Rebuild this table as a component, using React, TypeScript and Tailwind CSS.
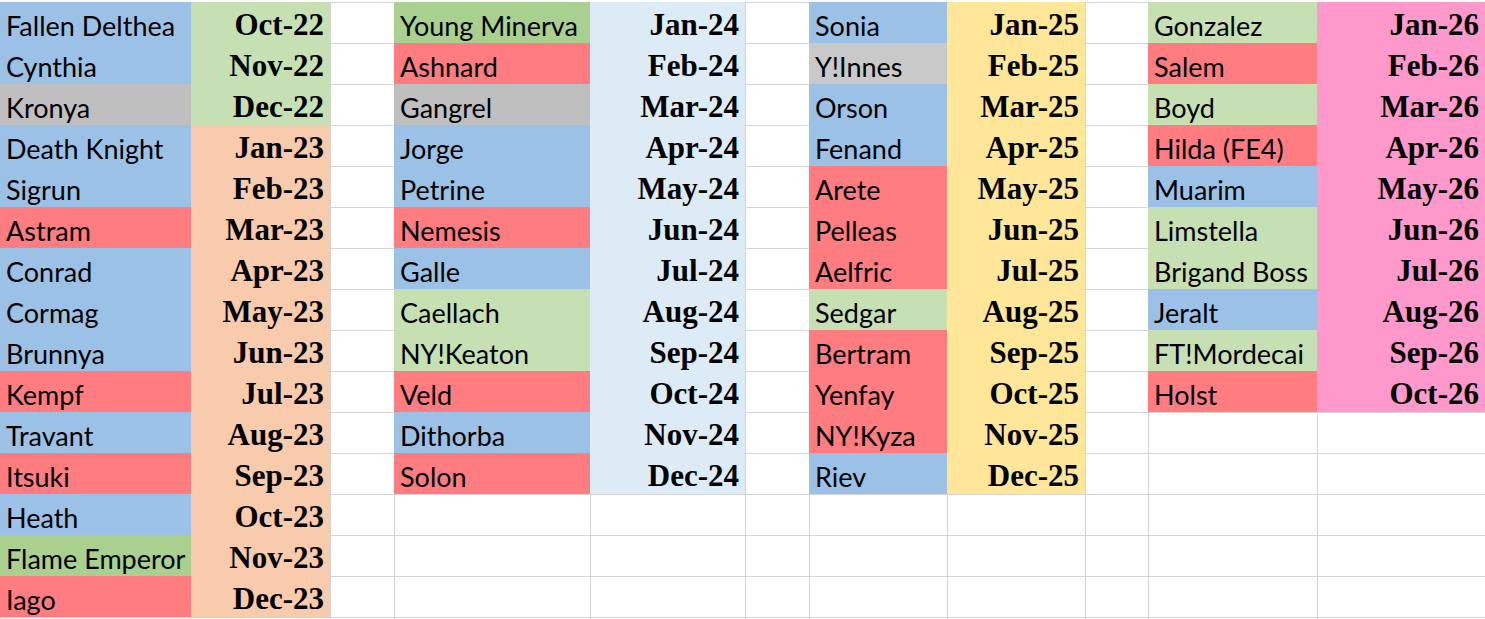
import React from "react";

type Cell =
  | { kind: "name"; text: string; bg: string }
  | { kind: "date"; text: string; bg: string }
  | { kind: "blank" };

const BLUE = "bg-[#9bc2e6]";
const RED = "bg-[#ff7c80]";
const GRAY = "bg-[#bfbfbf]";
const LGRAY = "bg-[#c9c9c9]";
const LGREEN = "bg-[#c6e0b4]";
const DGREEN = "bg-[#a9d08e]";
const PEACH = "bg-[#f8cbad]";
const LBLUE = "bg-[#ddebf7]";
const YELLOW = "bg-[#ffe699]";
const PINK = "bg-[#ff99cc]";

const colA: [string, string][] = [
  ["Fallen Delthea", BLUE],
  ["Cynthia", BLUE],
  ["Kronya", GRAY],
  ["Death Knight", BLUE],
  ["Sigrun", BLUE],
  ["Astram", RED],
  ["Conrad", BLUE],
  ["Cormag", BLUE],
  ["Brunnya", BLUE],
  ["Kempf", RED],
  ["Travant", BLUE],
  ["Itsuki", RED],
  ["Heath", BLUE],
  ["Flame Emperor", DGREEN],
  ["Iago", RED],
];

const colB: [string, string][] = [
  ["Oct-22", LGREEN],
  ["Nov-22", LGREEN],
  ["Dec-22", LGREEN],
  ["Jan-23", PEACH],
  ["Feb-23", PEACH],
  ["Mar-23", PEACH],
  ["Apr-23", PEACH],
  ["May-23", PEACH],
  ["Jun-23", PEACH],
  ["Jul-23", PEACH],
  ["Aug-23", PEACH],
  ["Sep-23", PEACH],
  ["Oct-23", PEACH],
  ["Nov-23", PEACH],
  ["Dec-23", PEACH],
];

const colD: [string, string][] = [
  ["Young Minerva", DGREEN],
  ["Ashnard", RED],
  ["Gangrel", GRAY],
  ["Jorge", BLUE],
  ["Petrine", BLUE],
  ["Nemesis", RED],
  ["Galle", BLUE],
  ["Caellach", LGREEN],
  ["NY!Keaton", LGREEN],
  ["Veld", RED],
  ["Dithorba", BLUE],
  ["Solon", RED],
];

const months = ["Jan", "Feb", "Mar", "Apr", "May", "Jun", "Jul", "Aug", "Sep", "Oct", "Nov", "Dec"];

const colG: [string, string][] = [
  ["Sonia", BLUE],
  ["Y!Innes", LGRAY],
  ["Orson", BLUE],
  ["Fenand", BLUE],
  ["Arete", RED],
  ["Pelleas", RED],
  ["Aelfric", RED],
  ["Sedgar", LGREEN],
  ["Bertram", RED],
  ["Yenfay", RED],
  ["NY!Kyza", RED],
  ["Riev", BLUE],
];

const colJ: [string, string][] = [
  ["Gonzalez", LGREEN],
  ["Salem", RED],
  ["Boyd", LGREEN],
  ["Hilda (FE4)", RED],
  ["Muarim", BLUE],
  ["Limstella", LGREEN],
  ["Brigand Boss", LGREEN],
  ["Jeralt", BLUE],
  ["FT!Mordecai", LGREEN],
  ["Holst", RED],
];

function nameAt(list: [string, string][], r: number): Cell {
  const v = list[r];
  return v ? { kind: "name", text: v[0], bg: v[1] } : { kind: "blank" };
}

function dateAt(count: number, year: string, bg: string, r: number): Cell {
  return r < count ? { kind: "date", text: `${months[r]}-${year}`, bg } : { kind: "blank" };
}

const ROWS = 16;

function buildRow(r: number): Cell[] {
  const b = colB[r];
  return [
    nameAt(colA, r),
    b ? { kind: "date", text: b[0], bg: b[1] } : { kind: "blank" },
    { kind: "blank" },
    nameAt(colD, r),
    dateAt(12, "24", LBLUE, r),
    { kind: "blank" },
    nameAt(colG, r),
    dateAt(12, "25", YELLOW, r),
    { kind: "blank" },
    nameAt(colJ, r),
    dateAt(10, "26", PINK, r),
  ];
}

function CellView({ cell }: { cell: Cell }) {
  if (cell.kind === "blank") {
    return <div className="h-[41px] border-l border-t border-[#d4d4d4] bg-white" />;
  }
  if (cell.kind === "name") {
    return (
      <div className={`h-[41px] flex items-end pl-[6px] pb-[4px] overflow-hidden whitespace-nowrap ${cell.bg}`}>
        <span className="leading-none text-[27px] text-black font-['Lato',sans-serif]">{cell.text}</span>
      </div>
    );
  }
  return (
    <div className={`h-[41px] flex items-end justify-end pr-[6px] pb-[3px] overflow-hidden whitespace-nowrap ${cell.bg}`}>
      <span className="leading-none text-[31px] font-bold text-black font-['Liberation_Serif',serif]">{cell.text}</span>
    </div>
  );
}

export default function App() {
  const rows = Array.from({ length: ROWS }, (_, r) => buildRow(r));
  return (
    <div className="w-[1485px] h-[619px] overflow-hidden bg-white pt-[2px]">
      <div className="grid grid-cols-[191px_139px_64px_196px_155px_64px_138px_138px_63px_169px_168px] auto-rows-[41px]">
        {rows.map((row, r) =>
          row.map((cell, c) => <CellView key={`${r}-${c}`} cell={cell} />)
        )}
      </div>
    </div>
  );
}
